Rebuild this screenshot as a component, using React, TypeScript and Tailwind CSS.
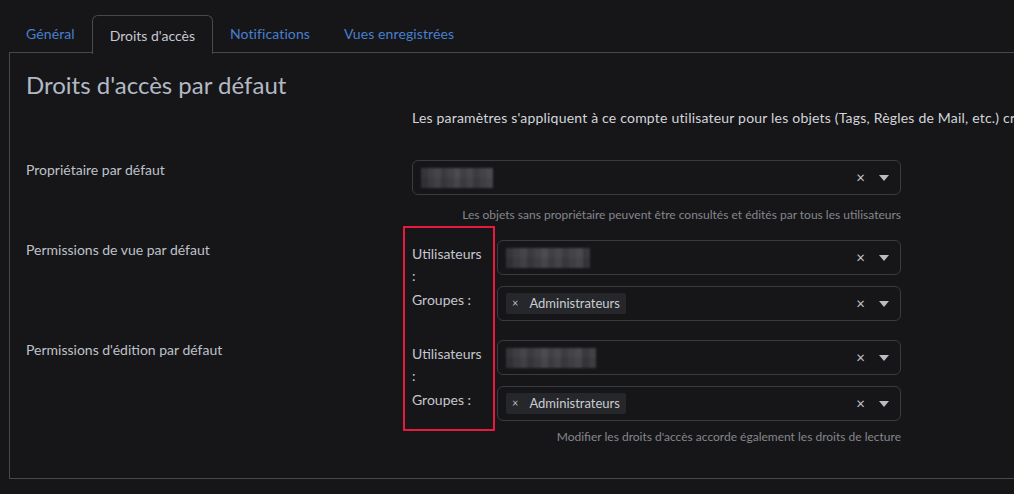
import React from "react";

const font = { fontFamily: "Lato, 'Noto Sans', sans-serif" };

function Blur({ w }: { w: number }) {
  const cells = [0x3a, 0x44, 0x4c, 0x40, 0x48, 0x52, 0x46, 0x4e, 0x42, 0x4a, 0x50, 0x3e, 0x47, 0x4b];
  return (
    <div className="flex h-[20px] items-stretch opacity-90 blur-[1px]" style={{ width: w }}>
      {cells.slice(0, Math.ceil(w / 7)).map((c, i) => (
        <div key={i} className="flex-1 flex flex-col">
          <div className="flex-1" style={{ background: `rgb(${c},${c},${c + 4})` }} />
          <div className="flex-1" style={{ background: `rgb(${c - 6},${c - 6},${c - 2})` }} />
        </div>
      ))}
    </div>
  );
}

function Caret() {
  return (
    <svg width="10" height="6" viewBox="0 0 10 6" className="ml-[14px]">
      <path d="M0 0 L10 0 L5 6 Z" fill="#b9bcc2" />
    </svg>
  );
}

function Select({ children }: { children?: React.ReactNode }) {
  return (
    <div className="h-[35px] rounded-[6px] border border-[#3a3b40] flex items-center pl-[8px] pr-[11px]">
      <div className="flex-1 flex items-center">{children}</div>
      <span className="text-[#c3c6cc] text-[15px] leading-none">×</span>
      <Caret />
    </div>
  );
}

function Chip() {
  return (
    <div className="h-[21px] bg-[#26272b] rounded-[2px] flex items-center px-[6px] text-[13px] text-[#c9ccd2]">
      <span className="text-[11px] text-[#b8bbc1] mr-[11px]">×</span>
      <span>Administrateurs</span>
    </div>
  );
}

function PermGroup({ first }: { first: number }) {
  return (
    <div className="flex flex-col gap-[11px] w-[489px]">
      <div className="flex">
        <div className="w-[85px] h-[35px] pt-[3px] text-[14px] leading-[22px] text-[#c4c7cd]">
          Utilisateurs
          <br />:
        </div>
        <div className="flex-1">
          <Select>
            <Blur w={first} />
          </Select>
        </div>
      </div>
      <div className="flex">
        <div className="w-[85px] h-[35px] pt-[3px] text-[14px] leading-[22px] text-[#c4c7cd]">Groupes :</div>
        <div className="flex-1">
          <Select>
            <Chip />
          </Select>
        </div>
      </div>
    </div>
  );
}

function Row({ label, children }: { label: string; children: React.ReactNode }) {
  return (
    <div className="flex items-start">
      <div className="w-[386px] text-[14px] leading-[20px] text-[#bfc2c8]">{label}</div>
      <div>{children}</div>
    </div>
  );
}

export default function App() {
  const tabs = ["Général", "Droits d'accès", "Notifications", "Vues enregistrées"];
  return (
    <div className="w-[1014px] h-[494px] overflow-hidden bg-[#161619]" style={font}>
      <div className="pt-[15px] pl-[9px]">
        <div className="flex h-[38px] border-b border-[#48494e] w-[1100px]">
          {tabs.map((t, i) =>
            i === 1 ? (
              <div
                key={t}
                className="px-[17px] flex items-center text-[14px] text-[#c6c9cf] border border-[#48494e] border-b-0 rounded-t-[6px] bg-[#161619] mb-[-1px] h-[39px]"
              >
                {t}
              </div>
            ) : (
              <div key={t} className="px-[17px] flex items-center text-[14px] tracking-[0.1px] text-[#4a7fcf]">
                {t}
              </div>
            )
          )}
        </div>
        <div className="w-[1100px] h-[426px] border-l border-b border-[#48494e] pl-[16px]">
          <div className="pt-[16px] text-[24px] leading-[32px] text-[#b3b9c4]">Droits d'accès par défaut</div>
          <div className="pl-[386px] mt-[7px] text-[14px] leading-[20px] tracking-[0.2px] text-[#d3d5da] whitespace-nowrap">
            Les paramètres s'appliquent à ce compte utilisateur pour les objets (Tags, Règles de Mail, etc.) créés via l'interface
          </div>

          <div className="mt-[32px]">
            <Row label="Propriétaire par défaut">
              <div className="w-[489px]">
                <Select>
                  <Blur w={72} />
                </Select>
                <div className="text-right text-[12px] leading-[16px] text-[#85878c] mt-[12px]">
                  Les objets sans propriétaire peuvent être consultés et édités par tous les utilisateurs
                </div>
              </div>
            </Row>
          </div>

          <div className="relative mt-[17px]">
            <Row label="Permissions de vue par défaut">
              <PermGroup first={84} />
            </Row>
            <div className="h-[19px]" />
            <Row label="Permissions d'édition par défaut">
              <div>
                <PermGroup first={90} />
                <div className="text-right text-[12px] leading-[16px] text-[#85878c] mt-[8px]">
                  Modifier les droits d'accès accorde également les droits de lecture
                </div>
              </div>
            </Row>
            <div className="absolute left-[377px] top-[-14px] w-[92px] h-[205px] border-2 border-[#e8193c] pointer-events-none" />
          </div>
        </div>
      </div>
    </div>
  );
}
